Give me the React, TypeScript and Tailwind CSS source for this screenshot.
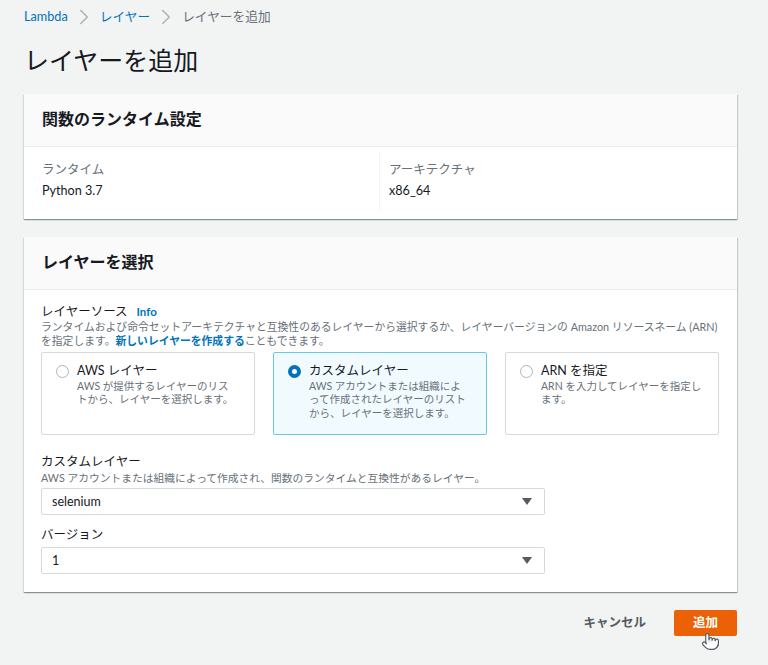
import { ChevronRight, Pointer } from "lucide-react";

const font = "font-['Lato','Noto_Sans_CJK_JP',sans-serif]";

function Radio({ checked }: { checked?: boolean }) {
  if (checked) {
    return <span className="mt-[3px] w-[13px] h-[13px] shrink-0 rounded-full border-[4px] border-[#0073bb] bg-white" />;
  }
  return <span className="mt-[3px] w-[13px] h-[13px] shrink-0 rounded-full border-[1.5px] border-[#aab7b8] bg-white" />;
}

function Tile({ title, desc, checked }: { title: string; desc: string[]; checked?: boolean }) {
  return (
    <div
      className={`w-[214px] h-[83px] flex gap-[8px] pl-[14px] pt-[9px] rounded-[2px] border ${
        checked ? "border-[#6cc9e2] bg-[#f1faff]" : "border-[#d5dbdb] bg-white"
      }`}
    >
      <Radio checked={checked} />
      <div>
        <p className="text-[12.5px] leading-[17px] text-[#16191f]">{title}</p>
        <div className="mt-[0.5px] text-[10.5px] leading-[13.5px] text-[#687078]">
          {desc.map((d) => (
            <p key={d} className="whitespace-nowrap">{d}</p>
          ))}
        </div>
      </div>
    </div>
  );
}

function SelectBox({ value }: { value: string }) {
  return (
    <div className="h-[27px] w-[504px] flex items-center justify-between pl-[10px] pr-[12px] bg-white border border-[#d5dbdb] rounded-[2px]">
      <span className="mt-[1px] text-[12.5px] text-[#16191f]">{value}</span>
      <span className="w-0 h-0 border-l-[5px] border-r-[5px] border-t-[7px] border-l-transparent border-r-transparent border-t-[#545b64]" />
    </div>
  );
}

function CardHeader({ children }: { children: string }) {
  return (
    <div className="h-[53px] flex items-center px-[18px] bg-[#fafafa] border-b border-[#eaeded]">
      <h2 className="-mt-[3px] text-[16px] font-bold text-[#16191f]">{children}</h2>
    </div>
  );
}

const cardShadow = "shadow-[0_1px_1px_0_rgba(0,28,36,0.3),1px_1px_1px_0_rgba(0,28,36,0.15),-1px_1px_1px_0_rgba(0,28,36,0.08)]";

export default function App() {
  return (
    <div className={`${font} w-[768px] h-[665px] overflow-hidden bg-[#f2f3f3] pl-[24px] pr-[31px] pt-[9px]`}>
      {/* Breadcrumbs */}
      <nav className="h-[16px] flex items-center text-[12.7px]">
        <span className="text-[#0073bb]">Lambda</span>
        <ChevronRight className="w-[26px] h-[26px] mx-[3px] text-[#aab7b8]" strokeWidth={1.5} />
        <span className="text-[#0073bb]">レイヤー</span>
        <ChevronRight className="w-[26px] h-[26px] mx-[3px] text-[#aab7b8]" strokeWidth={1.5} />
        <span className="text-[#687078]">レイヤーを追加</span>
      </nav>

      <h1 className="mt-[17px] h-[36px] leading-[36px] text-[25px] text-[#16191f]">レイヤーを追加</h1>

      {/* ランタイム */}
      <section className={`mt-[16px] h-[125px] bg-white ${cardShadow}`}>
        <CardHeader>関数のランタイム設定</CardHeader>
        <div className="flex pt-[5px]">
          <div className="w-[356px] h-[59px] pl-[18px] pt-[8px] border-r border-[#f2f3f3]">
            <p className="text-[12.5px] leading-[20px] text-[#687078]">ランタイム</p>
            <p className="mt-[1px] text-[12.6px] leading-[20px] text-[#16191f]">Python 3.7</p>
          </div>
          <div className="pl-[9px] pt-[8px]">
            <p className="text-[12.5px] leading-[20px] text-[#687078]">アーキテクチャ</p>
            <p className="mt-[1px] text-[12.6px] leading-[20px] text-[#16191f]">x86_64</p>
          </div>
        </div>
      </section>

      {/* レイヤーを選択 */}
      <section className={`mt-[18px] h-[355px] bg-white ${cardShadow}`}>
        <CardHeader>レイヤーを選択</CardHeader>
        <div className="px-[17px] pt-[13px]">
          <p className="h-[17px] leading-[17px] text-[12.5px] text-[#16191f]">
            レイヤーソース<span className="ml-[9px] text-[11.5px] font-bold text-[#0073bb]">Info</span>
          </p>
          <p className="text-[10.8px] leading-[13.5px] text-[#687078] whitespace-nowrap">
            ランタイムおよび命令セットアーキテクチャと互換性のあるレイヤーから選択するか、レイヤーバージョンの Amazon リソースネーム (ARN)
            <br />
            を指定します。<span className="font-bold text-[#0073bb]">新しいレイヤーを作成する</span>こともできます。
          </p>

          <div className="mt-[5px] flex gap-[18px]">
            <Tile title="AWS レイヤー" desc={["AWS が提供するレイヤーのリス", "トから、レイヤーを選択します。"]} />
            <Tile
              checked
              title="カスタムレイヤー"
              desc={["AWS アカウントまたは組織によ", "って作成されたレイヤーのリスト", "から、レイヤーを選択します。"]}
            />
            <Tile title="ARN を指定" desc={["ARN を入力してレイヤーを指定し", "ます。"]} />
          </div>

          <p className="mt-[18px] h-[17px] leading-[17px] text-[12.5px] text-[#16191f]">カスタムレイヤー</p>
          <p className="mt-[1px] h-[13px] leading-[13px] text-[10.75px] text-[#687078]">
            AWS アカウントまたは組織によって作成され、関数のランタイムと互換性があるレイヤー。
          </p>
          <div className="mt-[4px]">
            <SelectBox value="selenium" />
          </div>

          <p className="mt-[11px] h-[17px] leading-[17px] text-[12.5px] text-[#16191f]">バージョン</p>
          <div className="mt-[4px]">
            <SelectBox value="1" />
          </div>
        </div>
      </section>

      {/* Actions */}
      <div className="mt-[18px] flex items-center justify-end">
        <span className="text-[12.5px] font-bold text-[#545b64]">キャンセル</span>
        <div className="relative ml-[28px]">
          <button className="block w-[63px] h-[26px] rounded-[2px] bg-[#ec6105] text-white text-[12.5px] font-bold">追加</button>
          <Pointer className="absolute left-[27px] top-[22px] w-[19px] h-[19px] text-[#545b64] fill-white" strokeWidth={1.5} />
        </div>
      </div>
    </div>
  );
}
